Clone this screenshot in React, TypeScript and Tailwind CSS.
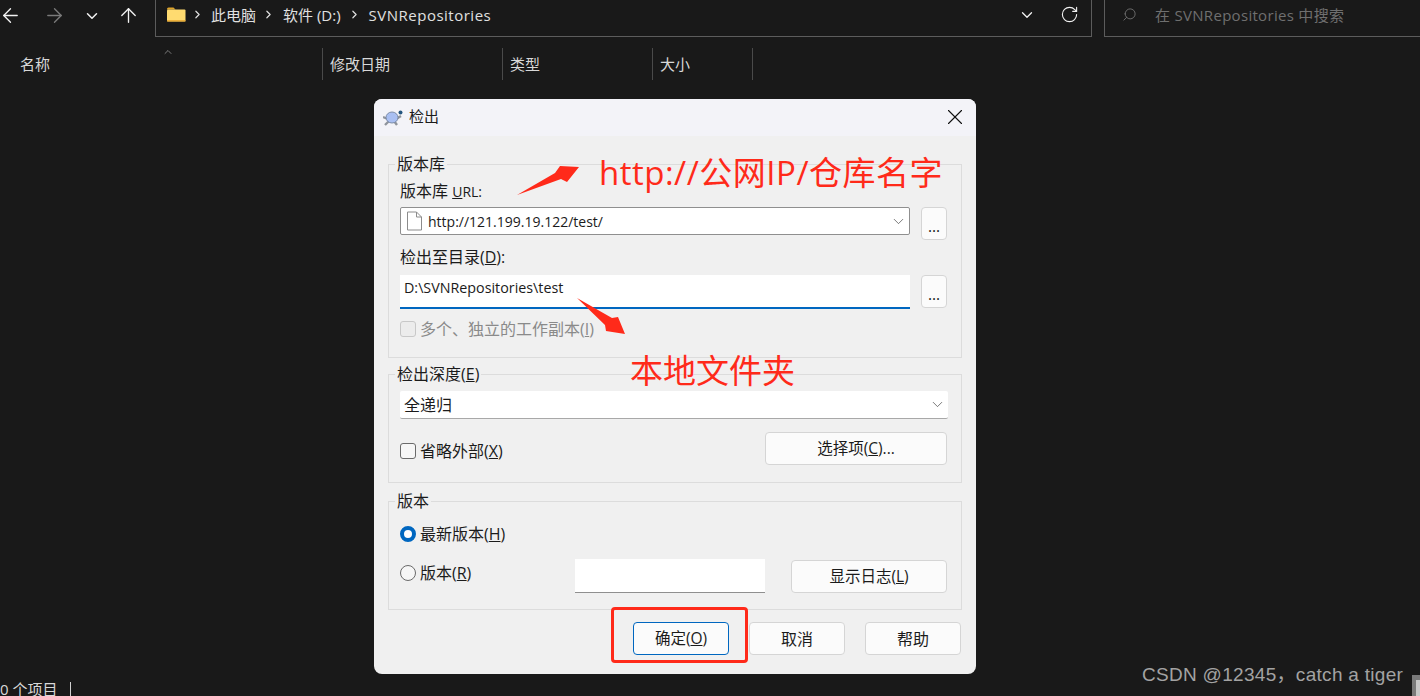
import { ArrowLeft, ArrowRight, ArrowUp, ChevronDown, ChevronRight, ChevronUp, RotateCw, Search, X } from "lucide-react";

const fontCn = "font-['Open_Sans','Noto_Sans_CJK_SC',sans-serif]";

function FolderIcon() {
  return (
    <svg width="19" height="15" viewBox="0 0 19 15">
      <path d="M0 2a1.5 1.5 0 0 1 1.5-1.5h5l2 2H0z" fill="#e0a429" />
      <rect x="0" y="2.5" width="18.5" height="12" rx="1" fill="#ffdb70" />
      <rect x="0" y="13.2" width="18.5" height="1.3" fill="#e9a72f" />
    </svg>
  );
}

function Turtle() {
  return (
    <svg width="20" height="18" viewBox="0 0 20 18">
      <path d="M0 9l5 2M2 17l4-4M14 17l-3-4M13 11l5-3" stroke="#8f949c" strokeWidth="2.4" fill="none" />
      <ellipse cx="9" cy="9.5" rx="6" ry="5.5" fill="#a9bff2" stroke="#75849e" strokeWidth="0.9" />
      <circle cx="17.5" cy="4.5" r="2" fill="#24557f" />
    </svg>
  );
}

function FileIcon() {
  return (
    <svg width="17" height="20" viewBox="0 0 17 20" fill="none">
      <path d="M1.5 1h9l5 5v13h-14z" fill="#fff" stroke="#8c8c8c" />
      <path d="M10.5 1v5h5" stroke="#8c8c8c" />
    </svg>
  );
}

function Btn({ children, className }: { children: React.ReactNode; className: string }) {
  return (
    <button className={`flex items-center justify-center rounded-[4px] border bg-[#fbfbfb] text-[15.5px] text-[#1b1b1b] ${className}`}>
      {children}
    </button>
  );
}

function Group({ title, className, children }: { title: React.ReactNode; className: string; children: React.ReactNode }) {
  return (
    <div className={`flex flex-col border border-[#dcdcdc] pl-[11px] pr-[14px] ${className}`}>
      <div className="-mt-[11px] -ml-[5px] h-[20px] w-fit bg-[#f0f0f0] px-[2px] text-[16px] leading-[20px] text-[#1b1b1b]">{title}</div>
      {children}
    </div>
  );
}

export default function App() {
  return (
    <div className={`relative flex h-[696px] w-[1420px] flex-col overflow-hidden bg-[#191919] text-[15px] text-[#e0e0e0] ${fontCn}`}>
      {/* Explorer toolbar */}
      <div className="flex h-[37px] shrink-0">
        <div className="flex w-[155px] items-center pb-[6px] text-[#f2f2f2]">
          <ArrowLeft size={23} strokeWidth={1.4} className="-ml-[1px]" />
          <ArrowRight size={23} strokeWidth={1.4} className="ml-[21px] text-[#7a7a7a]" />
          <ChevronDown size={18} strokeWidth={2} className="ml-[17px]" />
          <ArrowUp size={23} strokeWidth={1.4} className="ml-[16px]" />
        </div>
        <div className="flex w-[937px] items-center border-b border-l border-r border-[#5c5c5c] pb-[7px] pl-[11px] leading-[20px]">
          <FolderIcon />
          <ChevronRight size={13} strokeWidth={2.2} className="ml-[5px] text-[#e0e0e0]" />
          <span className="ml-[7px]">此电脑</span>
          <ChevronRight size={13} strokeWidth={2.2} className="ml-[6px] text-[#e0e0e0]" />
          <span className="ml-[8px]">软件 (D:)</span>
          <ChevronRight size={13} strokeWidth={2.2} className="ml-[7px] text-[#e0e0e0]" />
          <span className="ml-[8px] tracking-[0.5px]">SVNRepositories</span>
          <ChevronDown size={18} strokeWidth={1.75} className="ml-auto text-[#f2f2f2]" />
          <RotateCw size={19} strokeWidth={1.4} className="ml-[24px] mr-[12px] text-[#f2f2f2]" />
        </div>
        <div className="ml-[12px] flex flex-1 items-center border-b border-l border-[#5c5c5c] pb-[7px] pl-[17px] leading-[20px] text-[#6f6f6f]">
          <Search size={15} strokeWidth={1.5} className="-scale-x-100" />
          <span className="ml-[18px] tracking-[0.3px]">在 SVNRepositories 中搜索</span>
        </div>
      </div>

      {/* Column headers */}
      <div className="relative mt-[11px] flex h-[32px] shrink-0 items-center text-[#d8d8d8]">
        <div className="h-full w-[323px] border-r border-[#4a4a4a] pl-[20px] leading-[32px]">名称</div>
        <div className="h-full w-[180px] border-r border-[#4a4a4a] pl-[7px] leading-[32px]">修改日期</div>
        <div className="h-full w-[150px] border-r border-[#4a4a4a] pl-[7px] leading-[32px]">类型</div>
        <div className="h-full w-[100px] border-r border-[#4a4a4a] pl-[7px] leading-[32px]">大小</div>
        <ChevronUp size={12} strokeWidth={1.3} className="absolute left-[162px] top-[-2px] text-[#b0b0b0]" />
      </div>

      <div className="flex-1" />

      {/* Status bar */}
      <div className="flex h-[14px] shrink-0 items-center text-[#d8d8d8]">
        <span className="leading-[14px]">0 个项目</span>
        <span className="ml-[13px] h-[14px] w-px bg-[#d0d0d0]" />
      </div>

      {/* Dialog */}
      <div className="absolute left-[374px] top-[99px] flex h-[575px] w-[602px] flex-col overflow-hidden rounded-[8px] bg-[#f0f0f0] text-[16px] text-[#1b1b1b]">
        <div className="flex h-[37px] shrink-0 items-center bg-[#f3f3f8] pb-[2px] pl-[9px] pr-[8px]">
          <Turtle />
          <span className="ml-[6px] text-[15px]">检出</span>
          <X size={26} strokeWidth={1} className="ml-auto text-[#111]" />
        </div>
        <div className="flex flex-1 flex-col px-[14px] pt-[28px]">
          <Group title="版本库" className="h-[194px]">
            <div className="mt-[7px] h-[20px] leading-[20px]">
              版本库 <span className="text-[14px]"><u>U</u>RL:</span>
            </div>
            <div className="mt-[6px] flex items-start">
              <div className="flex h-[28px] w-[510px] items-center rounded-[2px] border border-[#8f8f8f] bg-white pl-[5px] pr-[2px] text-[14px]">
                <FileIcon />
                <span className="ml-[5px]">http://121.199.19.122/test/</span>
                <ChevronDown size={17} strokeWidth={1} className="ml-auto text-[#444]" />
              </div>
              <Btn className="ml-[11px] h-[33px] w-[26px] border-[#d5d5d5] pt-[6px] leading-none">...</Btn>
            </div>
            <div className="mt-[7px] h-[20px] leading-[20px]">
              检出至目录(<u>D</u>):
            </div>
            <div className="mt-[8px] flex items-start">
              <div className="h-[34px] w-[510px] border-b-2 border-[#0067c0] bg-white pl-[4px] text-[14.3px] leading-[26px]">D:\SVNRepositories\test</div>
              <Btn className="ml-[11px] h-[33px] w-[26px] border-[#d5d5d5] pt-[6px] leading-none">...</Btn>
            </div>
            <div className="mt-[12px] flex items-center text-[#8a8a8a]">
              <span className="h-[16px] w-[16px] rounded-[3px] border border-[#c8c8c8] bg-[#ececec]" />
              <span className="ml-[4px] leading-[16px]">
                多个、独立的工作副本(<u>I</u>)
              </span>
            </div>
          </Group>

          <Group title={<>检出深度(<u>E</u>)</>} className="mt-[16px] h-[109px]">
            <div className="mt-[7px] flex h-[28px] w-[548px] items-center rounded-[2px] border-b border-[#a8a8a8] bg-white pl-[4px] pr-[2px]">
              全递归
              <ChevronDown size={17} strokeWidth={1} className="ml-auto text-[#444]" />
            </div>
            <div className="mt-[13px] flex items-start justify-between">
              <div className="mt-[7px] flex items-center">
                <span className="h-[16px] w-[16px] rounded-[3px] border border-[#6a6a6a] bg-[#f6f6f6]" />
                <span className="ml-[4px]">
                  省略外部(<u>X</u>)
                </span>
              </div>
              <Btn className="h-[33px] w-[182px] border-[#d5d5d5]">
                <span>
                  选择项(<u>C</u>)...
                </span>
              </Btn>
            </div>
          </Group>

          <Group title="版本" className="mt-[18px] h-[109px]">
            <div className="mt-[11px] flex items-center">
              <span className="h-[16px] w-[16px] rounded-full border-[4px] border-[#0067c0] bg-white" />
              <span className="ml-[4px]">
                最新版本(<u>H</u>)
              </span>
            </div>
            <div className="mt-[13px] flex items-start">
              <div className="mt-[2px] flex w-[175px] items-center">
                <span className="h-[16px] w-[16px] rounded-full border border-[#6a6a6a] bg-[#f6f6f6]" />
                <span className="ml-[4px]">
                  版本(<u>R</u>)
                </span>
              </div>
              <div className="h-[34px] w-[190px] border-b border-[#8f8f8f] bg-white" />
              <Btn className="ml-[26px] mt-[1px] h-[33px] w-[156px] border-[#d5d5d5]">
                <span>
                  显示日志(<u>L</u>)
                </span>
              </Btn>
            </div>
          </Group>

          <div className="mt-[12px] flex justify-end gap-[20px] pr-[1px]">
            <Btn className="h-[33px] w-[96px] border-[#0067c0]">
              <span>
                确定(<u>O</u>)
              </span>
            </Btn>
            <Btn className="h-[33px] w-[96px] border-[#d5d5d5] text-[16px]">取消</Btn>
            <Btn className="h-[33px] w-[96px] border-[#d5d5d5] text-[16px]">帮助</Btn>
          </div>
        </div>
      </div>

      {/* Red annotations */}
      <svg className="absolute left-0 top-0" width="1420" height="696" viewBox="0 0 1420 696">
        <polygon points="517,195 555,173 560,166 579,167 567,182 561,179" fill="#ff2a1a" />
        <polygon points="577,298 612,318 618,317 625,334 606,331 605,325" fill="#ff2a1a" />
      </svg>
      <div className="absolute left-[599px] top-[149px] text-[33px] leading-[48px] tracking-[0.5px] text-[#ff2a1a]">http://公网IP/仓库名字</div>
      <div className="absolute left-[630px] top-[347px] text-[33px] leading-[48px] text-[#ff2a1a]">本地文件夹</div>
      <div className="absolute left-[611px] top-[607px] h-[56px] w-[137px] rounded-[4px] border-[3px] border-[#ff2a1a]" />

      {/* Watermark */}
      <div className="absolute left-[1142px] top-[662px] font-['Liberation_Sans','Noto_Sans_CJK_SC',sans-serif] text-[19px] leading-[26px] tracking-[0.3px] text-[#a3a3a3]">
        CSDN @12345，catch a tiger
      </div>
      <div className="absolute left-[1412px] top-[675px] h-[21px] w-[8px] border-l-[4px] border-t-[5px] border-[#7a7a7a] bg-[#c8c8c8]" />
    </div>
  );
}
